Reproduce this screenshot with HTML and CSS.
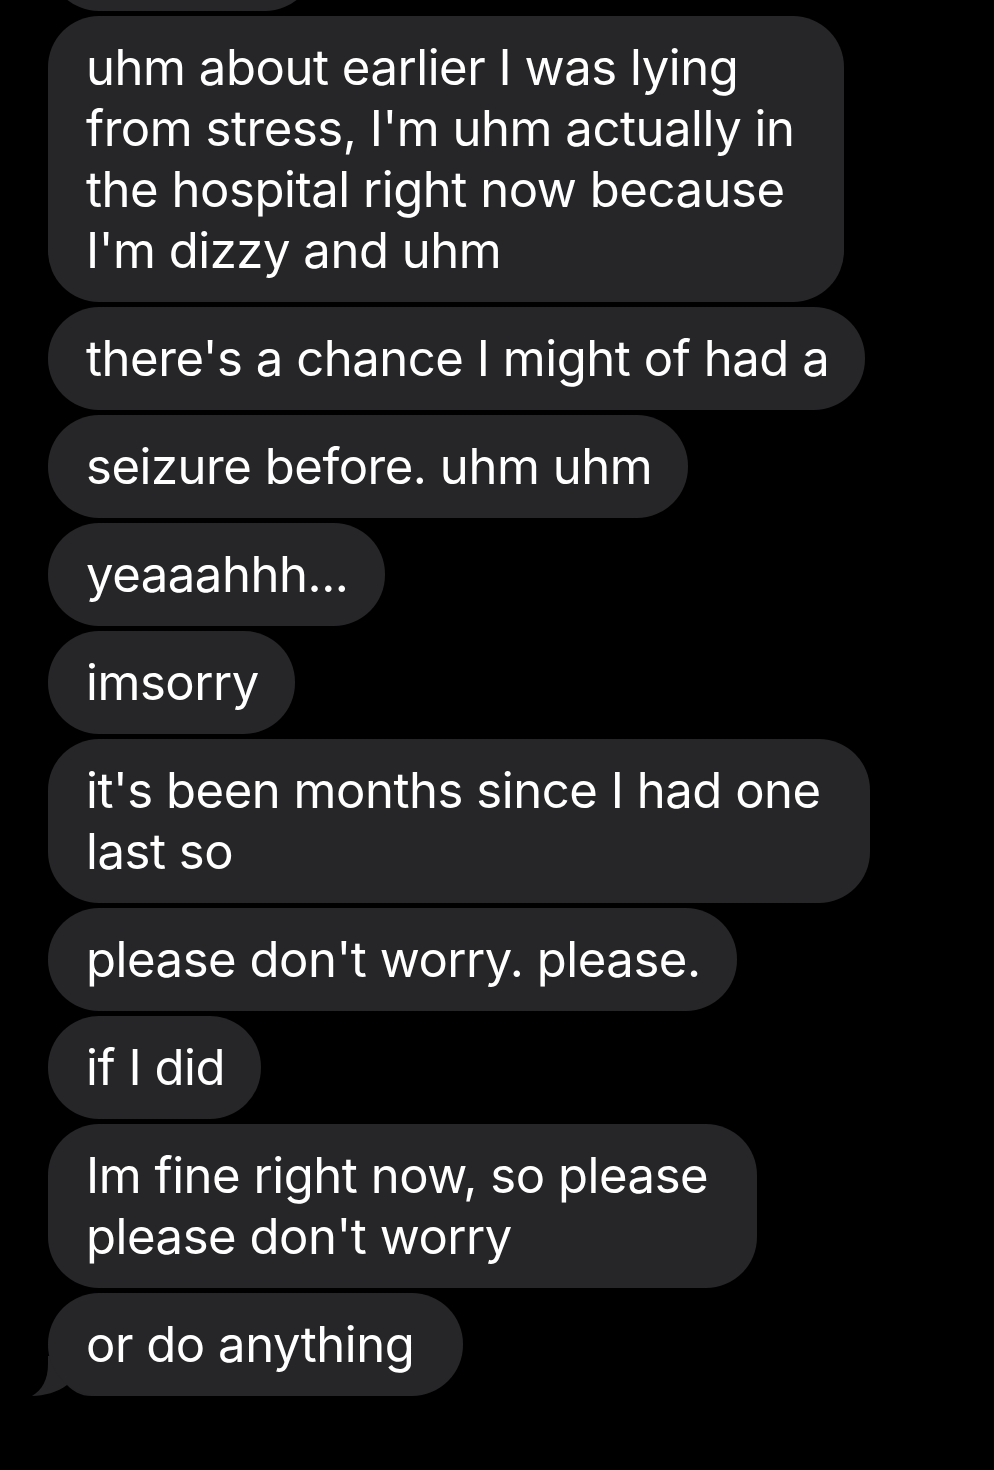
FILE: index.html
```html
<!DOCTYPE html>
<html lang="en">
<head>
    <meta charset="UTF-8">
    <meta name="viewport" content="width=device-width, initial-scale=1.0">
    <title>Messages</title>
    <link rel="stylesheet" href="styles.css">
</head>
<body>

    <div class="thread">
        <div class="bubble stub"></div>
        <div class="bubble multi">uhm about earlier I was lying<br>from stress, I'm uhm actually in<br>the hospital right now because<br>I'm dizzy and uhm</div>
        <div class="bubble">there's a chance I might of had a</div>
        <div class="bubble">seizure before. uhm uhm</div>
        <div class="bubble">yeaaahhh...</div>
        <div class="bubble">imsorry</div>
        <div class="bubble multi">it's been months since I had one<br>last so</div>
        <div class="bubble">please don't worry. please.</div>
        <div class="bubble">if I did</div>
        <div class="bubble multi">Im fine right now, so please<br>please don't worry</div>
        <div class="bubble last">
            or do anything
            <svg class="tail" width="80" height="40" viewBox="0 0 80 40">
                <path d="M18,0 L18,8 C18,24 12,34 2,40 C14,40 28,36 37,29 C43,35 50,40 62,40 L80,40 L80,0 Z" fill="#262629"/>
            </svg>
        </div>
    </div>

</body>
</html>
```

FILE: styles.css
```css
body {
    margin: 0;
    background-color: #000;
    font-family: Inter, 'Noto Sans', sans-serif;
    height: 1470px;
    overflow: hidden;
}
.thread {
    position: relative;
    z-index: 0;
    display: flex;
    flex-direction: column;
    align-items: flex-start;
    gap: 5px;
    padding-left: 48px;
}
.bubble {
    position: relative;
    background-color: #262629;
    color: #fff;
    font-size: 49px;
    letter-spacing: -0.45px;
    line-height: 61px;
    padding: 21px 36px 21px 38px;
    border-radius: 51px;
    white-space: nowrap;
}
.bubble.multi,
.bubble.last {
    padding-right: 49px;
}
/* bottom of the message cut off at the top of the screen */
.bubble.stub {
    width: 268px;
    height: 61px;
    padding-left: 0;
    padding-right: 0;
    margin-top: -92px;
}
.tail {
    position: absolute;
    left: -18px;
    bottom: 0;
    z-index: -1;
}
```
